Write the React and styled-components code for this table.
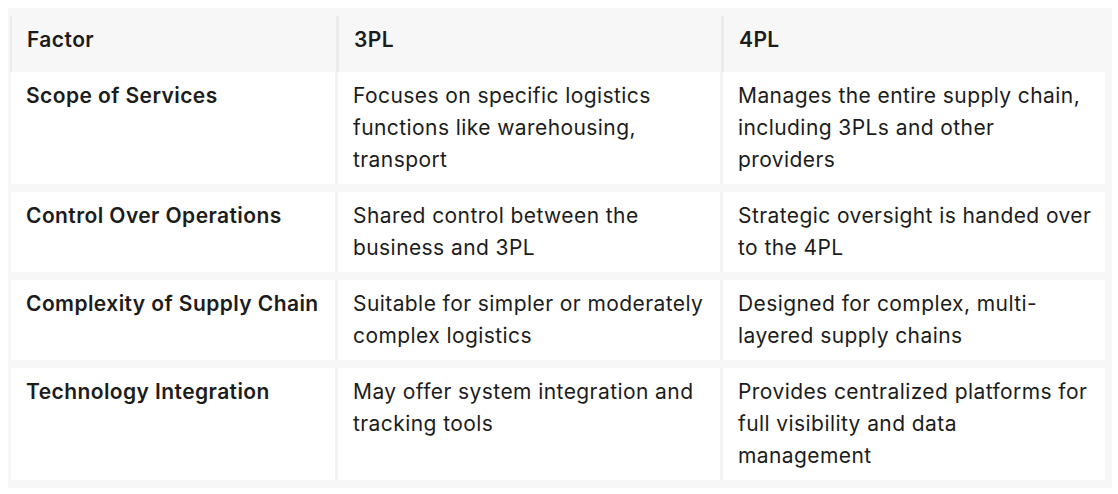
import React from "react";
import styled, { createGlobalStyle } from "styled-components";

const Global = createGlobalStyle`
  html, body { margin: 0; padding: 0; background: #ffffff; }
  body { padding: 8px; font-family: "Inter", "Noto Sans", sans-serif; }
`;

const Table = styled.div`
  width: 1104px;
  background: #f7f7f7;
  padding: 8px 7px 8px 3px;
  box-sizing: border-box;
  display: flex;
  flex-direction: column;
`;

const Body = styled.div`
  display: flex;
  flex-direction: column;
  gap: 8px;
`;

const Row = styled.div`
  display: grid;
  grid-template-columns: 324px 382px 382px;
  column-gap: 3px;
  background: ${(p) => (p.$head ? "#ebebeb" : "#f3f3f3")};
`;

const Cell = styled.div`
  background: ${(p) => (p.$head ? "#f7f7f7" : "#ffffff")};
  padding: ${(p) => (p.$head ? "8px 12px 16px 15px" : "8px 12px 8px 15px")};
  font-size: 21px;
  line-height: 32px;
  color: #1c1c1c;
  font-weight: ${(p) => (p.$bold ? 600 : 400)};
  letter-spacing: 0.42px;
`;

const HeadWrap = styled.div`
  border-left: 2px solid #ebebeb;
  margin-left: -1px;
`;

const rows = [
  [
    "Scope of Services",
    "Focuses on specific logistics functions like warehousing, transport",
    "Manages the entire supply chain, including 3PLs and other providers",
  ],
  [
    "Control Over Operations",
    "Shared control between the business and 3PL",
    "Strategic oversight is handed over to the 4PL",
  ],
  [
    "Complexity of Supply Chain",
    "Suitable for simpler or moderately complex logistics",
    "Designed for complex, multi-layered supply chains",
  ],
  [
    "Technology Integration",
    "May offer system integration and tracking tools",
    "Provides centralized platforms for full visibility and data management",
  ],
];

export default function App() {
  return (
    <>
      <Global />
      <Table>
        <HeadWrap>
          <Row $head>
            <Cell $head $bold>Factor</Cell>
            <Cell $head $bold>3PL</Cell>
            <Cell $head $bold>4PL</Cell>
          </Row>
        </HeadWrap>
        <Body>
          {rows.map((r) => (
            <Row key={r[0]}>
              <Cell $bold>{r[0]}</Cell>
              <Cell>{r[1]}</Cell>
              <Cell>{r[2]}</Cell>
            </Row>
          ))}
        </Body>
      </Table>
    </>
  );
}
